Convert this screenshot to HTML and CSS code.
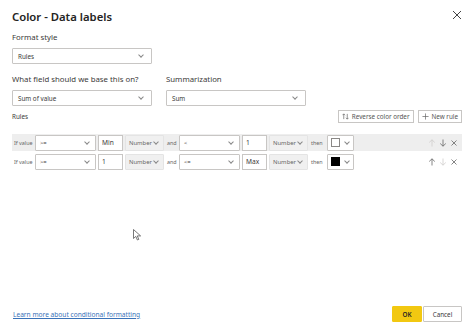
FILE: index.html
```html
<!DOCTYPE html>
<html lang="en">
<head>
<meta charset="UTF-8" />
<meta name="viewport" content="width=device-width, initial-scale=1.0" />
<title>Color - Data labels</title>
<link rel="stylesheet" href="styles.css">
</head>
<body>

<div class="dialog">
  <div class="head">
    <h1>Color - Data labels</h1>
    <button class="close" type="button" aria-label="Close">
      <svg width="10" height="10" viewBox="0 0 10 10"><path d="M1 1L9 9M9 1L1 9" stroke="#444" stroke-width="1" fill="none"/></svg>
    </button>
  </div>

  <div class="field">
    <label>Format style</label>
    <div class="select wide">Rules<span class="chev"></span></div>
  </div>

  <div class="pair">
    <div class="field">
      <label>What field should we base this on?</label>
      <div class="select wide">Sum of value<span class="chev"></span></div>
    </div>
    <div class="field">
      <label>Summarization</label>
      <div class="select wide">Sum<span class="chev"></span></div>
    </div>
  </div>

  <div class="rules-bar">
    <span class="rules-title">Rules</span>
    <div class="actions">
      <button class="small-btn" type="button">
        <svg width="7" height="7" viewBox="0 0 8 8"><path d="M2 7V1M0.5 2.5L2 1L3.5 2.5M6 1V7M4.5 5.5L6 7L7.5 5.5" stroke="#666" stroke-width="0.8" fill="none"/></svg>
        Reverse color order
      </button>
      <button class="small-btn" type="button">
        <svg width="7" height="7" viewBox="0 0 8 8"><path d="M4 0.5V7.5M0.5 4H7.5" stroke="#666" stroke-width="0.8" fill="none"/></svg>
        New rule
      </button>
    </div>
  </div>

  <div class="rule-row active">
    <span class="word if">If value</span>
    <div class="select op">&gt;=<span class="chev"></span></div>
    <div class="input">Min</div>
    <div class="select num">Number<span class="chev"></span></div>
    <span class="word and">and</span>
    <div class="select op">&lt;<span class="chev"></span></div>
    <div class="input">1</div>
    <div class="select num">Number<span class="chev"></span></div>
    <span class="word then">then</span>
    <div class="select swatch"><span class="color white"></span><span class="chev"></span></div>
    <div class="row-tools">
      <svg class="off" width="8" height="8" viewBox="0 0 8 8"><path d="M4 7.5V0.8M1.2 3.5L4 0.8L6.8 3.5" stroke="currentColor" stroke-width="0.8" fill="none"/></svg>
      <svg width="8" height="8" viewBox="0 0 8 8"><path d="M4 0.5V7.2M1.2 4.5L4 7.2L6.8 4.5" stroke="currentColor" stroke-width="0.8" fill="none"/></svg>
      <svg width="8" height="8" viewBox="0 0 8 8"><path d="M1.5 1.5L6.5 6.5M6.5 1.5L1.5 6.5" stroke="currentColor" stroke-width="0.8" fill="none"/></svg>
    </div>
  </div>

  <div class="rule-row">
    <span class="word if">If value</span>
    <div class="select op">&gt;=<span class="chev"></span></div>
    <div class="input">1</div>
    <div class="select num">Number<span class="chev"></span></div>
    <span class="word and">and</span>
    <div class="select op">&lt;=<span class="chev"></span></div>
    <div class="input">Max</div>
    <div class="select num">Number<span class="chev"></span></div>
    <span class="word then">then</span>
    <div class="select swatch"><span class="color black"></span><span class="chev"></span></div>
    <div class="row-tools">
      <svg width="8" height="8" viewBox="0 0 8 8"><path d="M4 7.5V0.8M1.2 3.5L4 0.8L6.8 3.5" stroke="currentColor" stroke-width="0.8" fill="none"/></svg>
      <svg class="off" width="8" height="8" viewBox="0 0 8 8"><path d="M4 0.5V7.2M1.2 4.5L4 7.2L6.8 4.5" stroke="currentColor" stroke-width="0.8" fill="none"/></svg>
      <svg width="8" height="8" viewBox="0 0 8 8"><path d="M1.5 1.5L6.5 6.5M6.5 1.5L1.5 6.5" stroke="currentColor" stroke-width="0.8" fill="none"/></svg>
    </div>
  </div>

  <div class="footer">
    <a href="#" class="learn">Learn more about conditional formatting</a>
    <div class="footer-buttons">
      <button class="ok" type="button">OK</button>
      <button class="cancel" type="button">Cancel</button>
    </div>
  </div>

  <!-- mouse pointer from the screenshot -->
  <svg class="cursor" width="9" height="12" viewBox="0 0 9 12"><path d="M0.5 0.5V9.5L2.8 7.4L4.4 11L5.8 10.4L4.3 6.9H7.6Z" fill="#fff" stroke="#555" stroke-width="0.8"/></svg>
</div>

</body>
</html>
```

FILE: styles.css
```css
* {
  box-sizing: border-box;
  margin: 0;
  padding: 0;
}

body {
  font-family: 'Noto Sans', 'Open Sans', sans-serif;
  background: #fff;
  color: #3b3a39;
}

.dialog {
  position: relative;
  height: 100vh;
  padding: 6px 12px 13px 12px;
  display: flex;
  flex-direction: column;
}

.head {
  display: flex;
  align-items: center;
  justify-content: space-between;
  height: 20px;
}

h1 {
  font-size: 11.3px;
  font-weight: 600;
  color: #252423;
}

.close {
  border: none;
  background: none;
  width: 10px;
  height: 10px;
  display: flex;
  margin-top: -2px;
}

.field {
  display: flex;
  flex-direction: column;
  gap: 5px;
}

.field label {
  font-size: 7.8px;
  line-height: 12px;
  color: #3b3a39;
  white-space: nowrap;
}

.head + .field {
  margin-top: 5px;
}

.pair {
  display: flex;
  gap: 14px;
  margin-top: 9px;
}

/* Dropdowns */
.select {
  position: relative;
  display: flex;
  align-items: center;
  flex-shrink: 0;
  height: 16px;
  border: 1px solid #c8c6c4;
  border-radius: 1px;
  background: #fff;
  font-size: 6.3px;
  color: #3b3a39;
  padding-left: 5px;
  white-space: nowrap;
}

.select.wide {
  width: 140px;
}

.chev {
  position: absolute;
  right: 8px;
  top: 4px;
  width: 4px;
  height: 4px;
  border-right: 1px solid #888;
  border-bottom: 1px solid #888;
  transform: rotate(45deg);
}

.rules-bar {
  display: flex;
  align-items: center;
  justify-content: space-between;
  margin-top: 4px;
  height: 13px;
}

.rules-title {
  font-size: 6.3px;
  color: #3b3a39;
}

.actions {
  display: flex;
  gap: 4px;
}

.small-btn {
  display: flex;
  align-items: center;
  gap: 3px;
  height: 13px;
  padding: 0 3px;
  border: 1px solid #c8c6c4;
  background: #fff;
  font-family: inherit;
  font-size: 6.3px;
  color: #555;
  white-space: nowrap;
}

/* Rule rows */
.rule-row {
  display: flex;
  align-items: center;
  gap: 2px;
  height: 17px;
  padding-left: 2px;
  font-size: 5.4px;
  color: #666;
}

.rule-row.active {
  background: #eeeeee;
  margin-top: 11px;
}

.rule-row + .rule-row {
  margin-top: 2px;
}

.rule-row .select {
  height: 16px;
  font-size: 5.9px;
  padding-left: 4px;
}

.rule-row .chev {
  right: 6px;
  top: 4.5px;
}

.word {
  flex-shrink: 0;
  white-space: nowrap;
}

.word.if {
  width: 19px;
}

.word.and {
  width: 10px;
  margin-left: 1px;
}

.word.then {
  width: 14px;
  margin-left: 1px;
}

.select.op {
  width: 61px;
}

.input {
  flex-shrink: 0;
  width: 25px;
  height: 16px;
  border: 1px solid #c8c6c4;
  background: #fff;
  display: flex;
  align-items: center;
  padding-left: 3px;
  font-size: 6.6px;
  color: #3b3a39;
}

.select.num {
  width: 39px;
  padding-left: 3px;
  background: #f0f0f0;
  border-color: #e4e4e4;
  color: #666;
}

.select.num .chev {
  right: 5px;
}

.select.swatch {
  width: 27px;
  padding-left: 3px;
}

.select.swatch .chev {
  right: 4px;
}

.color {
  width: 9px;
  height: 9px;
  border: 1px solid #8a8886;
  background: #fff;
}

.color.black {
  background: #000;
  border-color: #000;
}

.row-tools {
  margin-left: auto;
  margin-right: 4px;
  display: flex;
  gap: 3px;
  color: #666;
}

.row-tools .off {
  color: #cfcdcb;
}

/* Footer */
.footer {
  margin-top: auto;
  display: flex;
  align-items: center;
  justify-content: space-between;
  padding-left: 1px;
}

.learn {
  font-size: 6.6px;
  color: #3a72b8;
  text-decoration: underline;
}

.footer-buttons {
  display: flex;
  gap: 1px;
}

.ok,
.cancel {
  height: 16px;
  font-family: inherit;
  font-size: 6.3px;
  border-radius: 1px;
  cursor: pointer;
}

.ok {
  width: 30px;
  background: #f2c811;
  border: 1px solid #f2c811;
  font-weight: 600;
  color: #252423;
}

.cancel {
  width: 39px;
  background: #fff;
  border: 1px solid #c8c6c4;
  color: #3b3a39;
}

.cursor {
  position: absolute;
  left: 133px;
  top: 229px;
}
```
